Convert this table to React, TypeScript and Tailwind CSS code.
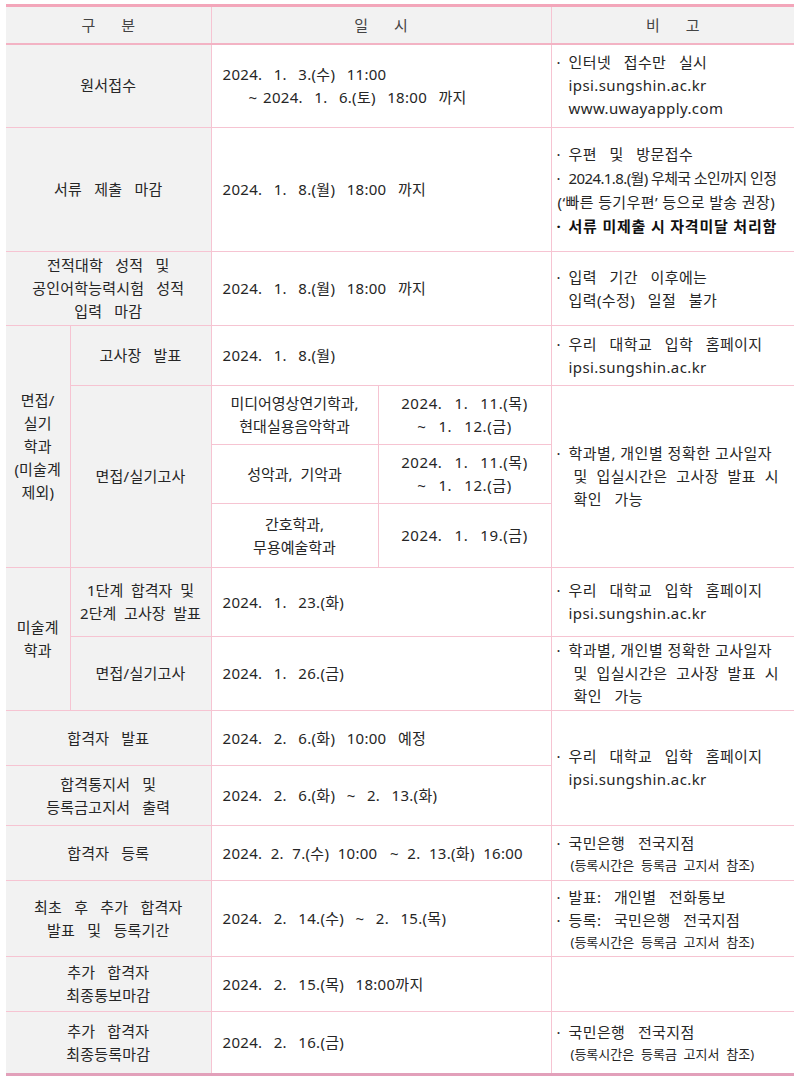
import React from "react";

// 성신여대 전형 일정표

const font = { fontFamily: '"Noto Sans", "Noto Sans CJK KR", sans-serif' };

type CellProps = {
  children?: React.ReactNode;
  colSpan?: number;
  rowSpan?: number;
  className?: string;
};

const Label = ({ children, colSpan, rowSpan, className = "" }: CellProps) => (
  <td
    colSpan={colSpan}
    rowSpan={rowSpan}
    className={`bg-[#f2f2f2] border-b border-r border-[#f6c4d2] text-center align-middle leading-[23px] whitespace-pre [word-spacing:2px] tracking-[0.2px] ${className}`}
  >
    {children}
  </td>
);

const DateCell = ({ children, colSpan, rowSpan, className = "" }: CellProps) => (
  <td
    colSpan={colSpan}
    rowSpan={rowSpan}
    className={`border-b border-r border-[#f6c4d2] pl-[11px] align-middle leading-[23px] whitespace-pre [word-spacing:1.5px] tracking-[0.3px] ${className}`}
  >
    {children}
  </td>
);

const SubCell = ({ children }: { children: React.ReactNode }) => (
  <td className="border-b border-r border-[#f6c4d2] text-center align-middle leading-[23px] whitespace-pre [word-spacing:1.5px] tracking-[0.6px]">
    {children}
  </td>
);

const Note = ({ children, rowSpan, className = "" }: CellProps) => (
  <td
    rowSpan={rowSpan}
    className={`border-b border-[#f6c4d2] pl-[5px] pr-[10px] align-middle leading-[23px] whitespace-pre [word-spacing:2px] tracking-[0.4px] ${className}`}
  >
    {children}
  </td>
);

// bullet line: "·" with the text after it
const Dot = ({ children, className = "" }: { children: React.ReactNode; className?: string }) => (
  <div className={`flex ${className}`}>
    <span className="w-[12px] shrink-0">·</span>
    <span className="flex-1">{children}</span>
  </div>
);

const Indent = ({ children, className = "" }: { children: React.ReactNode; className?: string }) => (
  <div className={`pl-[12px] ${className}`}>{children}</div>
);

const Small = ({ children }: { children: React.ReactNode }) => (
  <div className="pl-[14px] text-[13px] leading-[20px] tracking-normal [word-spacing:0px]">{children}</div>
);

// 학과별 고사일자 안내 (두 곳에서 사용)
const ExamNote = () => (
  <>
    <Dot className="tracking-[0.5px] [word-spacing:0px]">학과별, 개인별 정확한 고사일자</Dot>
    <div className="pl-[17px] pr-[5px] whitespace-normal text-justify [text-align-last:justify]">
      및 입실시간은 고사장 발표 시
    </div>
    <div className="pl-[17px]">확인  가능</div>
  </>
);

const Header = ({ a, b, colSpan }: { a: string; b: string; colSpan?: number }) => (
  <th
    colSpan={colSpan}
    className="bg-[#f2f2f2] border-t-[3px] border-t-[#f3a6ba] border-b-2 border-b-[#f3b3c4] border-r border-r-[#f6c4d2] last:border-r-0 font-normal text-[#444]"
  >
    <div className="flex justify-center gap-[26px]">
      <span>{a}</span>
      <span>{b}</span>
    </div>
  </th>
);

export default function App() {
  return (
    <div className="bg-white w-[800px] min-h-[1078px] pt-[4px] pl-[6px] text-[15px] text-[#262626]" style={font}>
      <table className="border-collapse table-fixed w-[788px]">
        <colgroup>
          <col className="w-[64px]" />
          <col className="w-[141px]" />
          <col className="w-[167px]" />
          <col className="w-[173px]" />
          <col className="w-[243px]" />
        </colgroup>
        <thead>
          <tr className="h-[38px]">
            <Header a="구" b="분" colSpan={2} />
            <Header a="일" b="시" colSpan={2} />
            <Header a="비" b="고" />
          </tr>
        </thead>
        <tbody>
          <tr className="h-[84px]">
            <Label colSpan={2}>원서접수</Label>
            <DateCell colSpan={2}>
              <div>2024.  1.  3.(수)  11:00</div>
              <div className="pl-[26px]">~ 2024.  1.  6.(토)  18:00  까지</div>
            </DateCell>
            <Note>
              <Dot>인터넷  접수만  실시</Dot>
              <Indent>ipsi.sungshin.ac.kr</Indent>
              <Indent>www.uwayapply.com</Indent>
            </Note>
          </tr>
          <tr className="h-[124px]">
            <Label colSpan={2}>서류  제출  마감</Label>
            <DateCell colSpan={2}>2024.  1.  8.(월)  18:00  까지</DateCell>
            <Note>
              <Dot className="leading-[24px]">우편  및  방문접수</Dot>
              <Dot className="leading-[24px] tracking-[-0.6px] [word-spacing:0px]">2024.1.8.(월) 우체국 소인까지 인정</Dot>
              <div className="leading-[24px] pl-[1px] tracking-[0.4px] [word-spacing:0px]">(‘빠른 등기우편’ 등으로 발송 권장)</div>
              <Dot className="leading-[24px] font-bold text-[#111] tracking-[0.8px] [word-spacing:0px]">서류 미제출 시 자격미달 처리함</Dot>
            </Note>
          </tr>
          <tr className="h-[74px]">
            <Label colSpan={2}>
              전적대학  성적  및
              <br />
              공인어학능력시험  성적
              <br />
              입력  마감
            </Label>
            <DateCell colSpan={2}>2024.  1.  8.(월)  18:00  까지</DateCell>
            <Note>
              <Dot>입력  기간  이후에는</Dot>
              <Indent>입력(수정)  일절  불가</Indent>
            </Note>
          </tr>
          <tr className="h-[60px]">
            <Label rowSpan={4}>
              면접/
              <br />
              실기
              <br />
              학과
              <br />
              (미술계
              <br />
              제외)
            </Label>
            <Label>고사장  발표</Label>
            <DateCell colSpan={2}>2024.  1.  8.(월)</DateCell>
            <Note>
              <Dot>우리  대학교  입학  홈페이지</Dot>
              <Indent className="pl-[10px]">ipsi.sungshin.ac.kr</Indent>
            </Note>
          </tr>
          <tr className="h-[59px]">
            <Label rowSpan={3}>면접/실기고사</Label>
            <td className="border-b border-r border-[#f6c4d2] text-center leading-[23px]">
              미디어영상연기학과,
              <br />
              현대실용음악학과
            </td>
            <SubCell>
              2024.  1.  11.(목)
              <br />
              ~  1.  12.(금)
            </SubCell>
            <Note rowSpan={3}>
              <ExamNote />
            </Note>
          </tr>
          <tr className="h-[59px]">
            <td className="border-b border-r border-[#f6c4d2] text-center whitespace-pre">성악과,  기악과</td>
            <SubCell>
              2024.  1.  11.(목)
              <br />
              ~  1.  12.(금)
            </SubCell>
          </tr>
          <tr className="h-[64px]">
            <td className="border-b border-r border-[#f6c4d2] text-center leading-[23px]">
              간호학과,
              <br />
              무용예술학과
            </td>
            <SubCell>2024.  1.  19.(금)</SubCell>
          </tr>
          <tr className="h-[69px]">
            <Label rowSpan={2}>
              미술계
              <br />
              학과
            </Label>
            <Label>
              <span className="tracking-normal [word-spacing:0px]">
                1단계  합격자  및
                <br />
                2단계  고사장  발표
              </span>
            </Label>
            <DateCell colSpan={2}>2024.  1.  23.(화)</DateCell>
            <Note>
              <Dot>우리  대학교  입학  홈페이지</Dot>
              <Indent className="pl-[10px]">ipsi.sungshin.ac.kr</Indent>
            </Note>
          </tr>
          <tr className="h-[74px]">
            <Label>면접/실기고사</Label>
            <DateCell colSpan={2}>2024.  1.  26.(금)</DateCell>
            <Note>
              <ExamNote />
            </Note>
          </tr>
          <tr className="h-[55px]">
            <Label colSpan={2}>합격자  발표</Label>
            <DateCell colSpan={2}>2024.  2.  6.(화)  10:00  예정</DateCell>
            <Note rowSpan={2}>
              <Dot>우리  대학교  입학  홈페이지</Dot>
              <Indent className="pl-[10px]">ipsi.sungshin.ac.kr</Indent>
            </Note>
          </tr>
          <tr className="h-[60px]">
            <Label colSpan={2}>
              합격통지서  및
              <br />
              등록금고지서  출력
            </Label>
            <DateCell colSpan={2}>2024.  2.  6.(화)  ~  2.  13.(화)</DateCell>
          </tr>
          <tr className="h-[55px]">
            <Label colSpan={2}>합격자  등록</Label>
            <DateCell colSpan={2}>
              <span className="[word-spacing:0px]">2024.  2.  7.(수)  10:00   ~  2.  13.(화)  16:00</span>
            </DateCell>
            <Note>
              <Dot>국민은행  전국지점</Dot>
              <Small>(등록시간은  등록금  고지서  참조)</Small>
            </Note>
          </tr>
          <tr className="h-[76px]">
            <Label colSpan={2}>
              최초  후  추가  합격자
              <br />
              발표  및  등록기간
            </Label>
            <DateCell colSpan={2}>2024.  2.  14.(수)  ~  2.  15.(목)</DateCell>
            <Note>
              <Dot>발표:  개인별  전화통보</Dot>
              <Dot>등록:  국민은행  전국지점</Dot>
              <Small>(등록시간은  등록금  고지서  참조)</Small>
            </Note>
          </tr>
          <tr className="h-[55px]">
            <Label colSpan={2}>
              추가  합격자
              <br />
              최종통보마감
            </Label>
            <DateCell colSpan={2}>2024.  2.  15.(목)  18:00까지</DateCell>
            <Note />
          </tr>
          <tr className="h-[63px]">
            <Label colSpan={2} className="border-b-[3px] border-b-[#e2a0ba]">
              추가  합격자
              <br />
              최종등록마감
            </Label>
            <DateCell colSpan={2} className="border-b-[3px] border-b-[#e2a0ba]">
              2024.  2.  16.(금)
            </DateCell>
            <Note className="border-b-[3px] border-b-[#e2a0ba]">
              <Dot>국민은행  전국지점</Dot>
              <Small>(등록시간은  등록금  고지서  참조)</Small>
            </Note>
          </tr>
        </tbody>
      </table>
    </div>
  );
}
